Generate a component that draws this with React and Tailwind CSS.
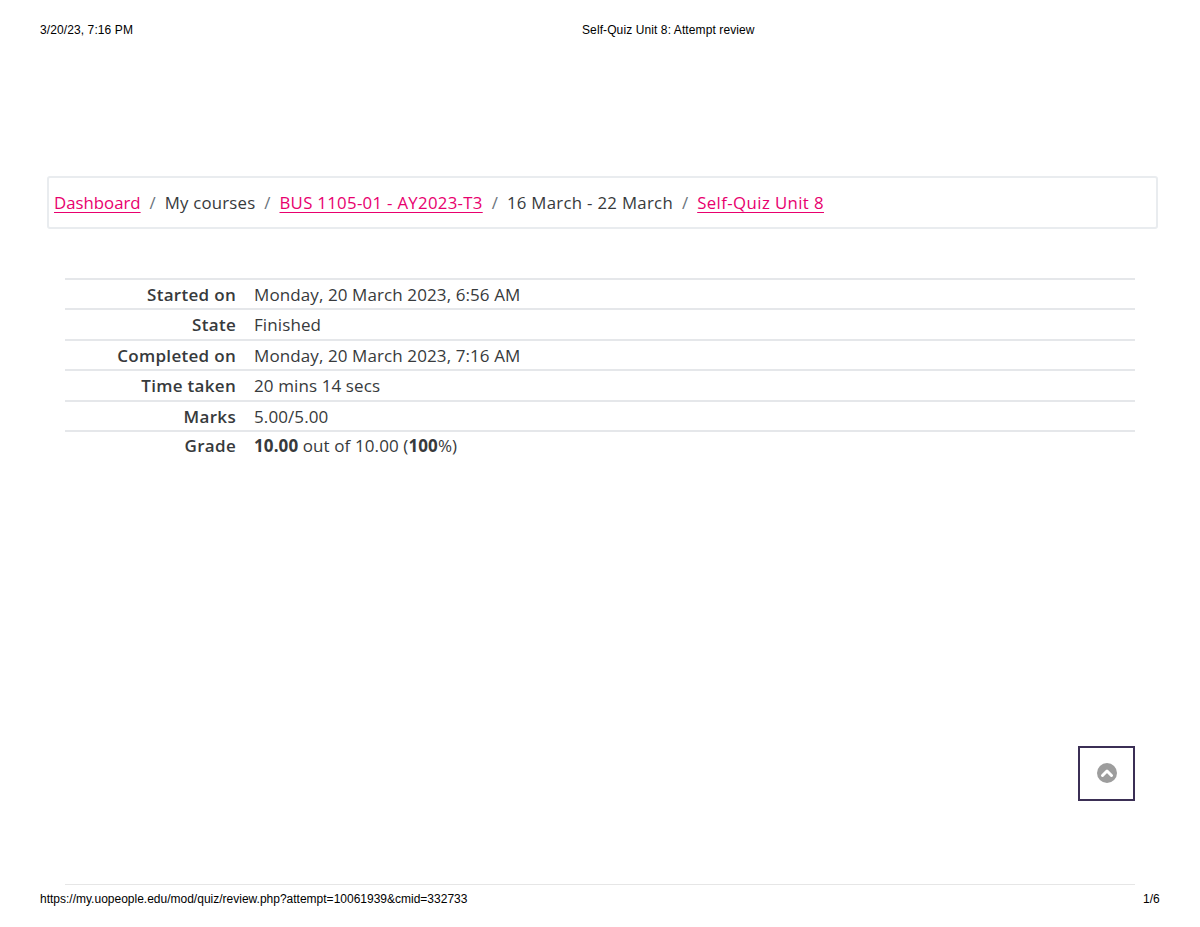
import React from "react";

const rows = [
  ["Started on", "Monday, 20 March 2023, 6:56 AM"],
  ["State", "Finished"],
  ["Completed on", "Monday, 20 March 2023, 7:16 AM"],
  ["Time taken", "20 mins 14 secs"],
  ["Marks", "5.00/5.00"],
];

export default function App() {
  return (
    <div className="w-[1200px] h-[927px] bg-white flex flex-col overflow-hidden relative">
      <div className="flex pt-[24px] text-[12px] leading-[13px] tracking-[0.1px] text-black" style={{ fontFamily: "'Liberation Sans', Arial, sans-serif" }}>
        <div className="w-[582px] pl-[40px]">3/20/23, 7:16 PM</div>
        <div>Self-Quiz Unit 8: Attempt review</div>
      </div>

      <div style={{ fontFamily: "'Open Sans', 'Noto Sans', sans-serif" }} className="flex flex-col">
        <div className="mt-[139px] ml-[47px] w-[1111px] h-[53px] border-2 border-[#e9ecef] rounded-[3px] flex items-center pl-[5px] text-[16.8px] text-[#373a3c]">
          <a className="text-[#e8006e] underline underline-offset-[3px]">Dashboard</a>
          <span className="mx-[9px] text-[#6a737b]">/</span>
          <span className="tracking-[0.2px]">My courses</span>
          <span className="mx-[9px] text-[#6a737b]">/</span>
          <a className="text-[#e8006e] underline underline-offset-[3px] tracking-[0.3px]">BUS 1105-01 - AY2023-T3</a>
          <span className="mx-[9px] text-[#6a737b]">/</span>
          <span className="tracking-[0.3px]">16 March - 22 March</span>
          <span className="mx-[9px] text-[#6a737b]">/</span>
          <a className="text-[#e8006e] underline underline-offset-[3px] tracking-[0.4px]">Self-Quiz Unit 8</a>
        </div>

        <div className="mt-[49px] ml-[65px] w-[1070px] border-t-2 border-[#e5e7ea] text-[17px] text-[#373a3c]">
          {rows.map(([k, v]) => (
            <div key={k} className="flex h-[30.4px] items-center pt-[1px] border-b-2 border-[#e5e7ea]">
              <div className="w-[171px] text-right font-semibold tracking-[0.3px]">{k}</div>
              <div className="pl-[18px] tracking-[0.1px]">{v}</div>
            </div>
          ))}
          <div className="flex h-[28px] items-center">
            <div className="w-[171px] text-right font-semibold tracking-[0.3px]">Grade</div>
            <div className="pl-[18px] tracking-[0.1px]"><span className="font-bold">10.00</span> out of 10.00 (<span className="font-bold">100</span>%)</div>
          </div>
        </div>

        <div className="mt-[286px] ml-[1078px] w-[57px] h-[55px] border-2 border-[#3b2f55] flex items-center justify-center">
          <svg width="22" height="22" viewBox="0 0 22 22">
            <circle cx="11" cy="11" r="10" fill="#9d9d9d" />
            <path d="M6.5 13.5 L11 9 L15.5 13.5" stroke="#fff" strokeWidth="3" fill="none" strokeLinecap="round" strokeLinejoin="round" />
          </svg>
        </div>
      </div>

      <div className="mt-[83px] ml-[65px] w-[1070px] border-t border-[#e6e6e6]" />
      <div className="flex pt-[8px] text-[12px] leading-[13px] text-black" style={{ fontFamily: "'Liberation Sans', Arial, sans-serif" }}>
        <div className="w-[1143px] pl-[40px]">https://my.uopeople.edu/mod/quiz/review.php?attempt=10061939&amp;cmid=332733</div>
        <div>1/6</div>
      </div>
    </div>
  );
}
